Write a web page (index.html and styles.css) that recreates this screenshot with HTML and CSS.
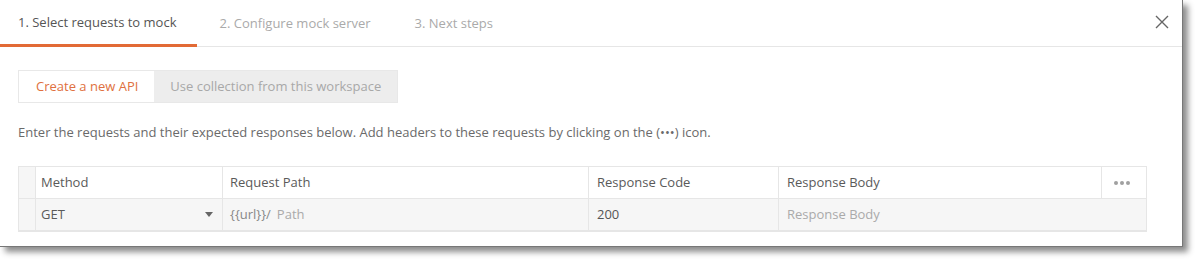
FILE: index.html
```html
<!DOCTYPE html>
<html>
<head>
<meta charset="utf-8">
<link rel="stylesheet" href="styles.css">
</head>
<body>
<div class="dialog">
  <div class="tabs">
    <div class="tab active">1. Select requests to mock</div>
    <div class="tab">2. Configure mock server</div>
    <div class="tab">3. Next steps</div>
    <div class="spacer"></div>
    <div class="close">
      <svg width="14" height="14" viewBox="0 0 14 14"><path d="M1 1L13 13M13 1L1 13" stroke="#666" stroke-width="1.4" fill="none"/></svg>
    </div>
  </div>
  <div class="content">
    <div class="segmented">
      <div class="seg active">Create a new API</div>
      <div class="seg">Use collection from this workspace</div>
    </div>
    <p class="desc">Enter the requests and their expected responses below. Add headers to these requests by clicking on the (•••) icon.</p>
    <div class="table">
      <div class="row head">
        <div class="cell c0"></div>
        <div class="cell c1">Method</div>
        <div class="cell c2">Request Path</div>
        <div class="cell c3">Response Code</div>
        <div class="cell c4">Response Body</div>
        <div class="cell c5"><span class="dots"><i></i><i></i><i></i></span></div>
      </div>
      <div class="row body">
        <div class="cell c0"></div>
        <div class="cell c1 method"><span>GET</span><span class="caret"></span></div>
        <div class="cell c2"><span class="url">{{url}}/</span><span class="ph">Path</span></div>
        <div class="cell c3 val">200</div>
        <div class="cell c45 ph">Response Body</div>
      </div>
    </div>
  </div>
</div>
</body>
</html>
```
FILE: styles.css
```css
html, body {
  margin: 0;
  padding: 0;
  background: #fff;
}
body {
  font-family: "Open Sans", "Liberation Sans", sans-serif;
  font-size: 13px;
  color: #555;
  width: 1200px;
  height: 263px;
  overflow: hidden;
}
.dialog {
  width: 1182px;
  height: 246px;
  background: #fff;
  border-right: 1px solid #777;
  border-bottom: 1px solid #777;
  box-shadow: 5px 5px 6px rgba(0,0,0,0.45);
  box-sizing: content-box;
}
.tabs {
  display: flex;
  align-items: stretch;
  height: 46px;
  border-bottom: 1px solid #e6e6e6;
}
.tab {
  padding: 0 22px;
  line-height: 46px;
  color: #aaa;
  white-space: nowrap;
}
.tab.active {
  padding-left: 18px;
  padding-right: 21px;
  color: #555;
  border-bottom: 3px solid #e26a35;
  margin-bottom: -1px;
  line-height: 44px;
}
.spacer { flex: 1; }
.close {
  width: 40px;
  display: flex;
  align-items: center;
  justify-content: center;
  padding-bottom: 2px;
}
.content {
  padding: 23px 0 0 18px;
}
.segmented {
  display: inline-flex;
  border: 1px solid #e8e8e8;
  height: 31px;
}
.seg {
  line-height: 31px;
  padding: 0 16px 0 16px;
  background: #ededed;
  color: #a8a8a8;
}
.seg.active {
  padding-left: 17px;
  background: #fff;
  color: #e07040;
}
.desc {
  margin: 0;
  padding-top: 20px;
  line-height: 18px;
  color: #6a6a6a;
}
.table {
  margin-top: 25px;
  width: 1127px;
  border: 1px solid #e6e6e6;
  border-bottom-width: 2px;
}
.row {
  display: flex;
  height: 31px;
}
.row.head {
  height: 32px;
  border-bottom: 1px solid #e6e6e6;
  background: #fff;
  box-sizing: border-box;
}
.row.body {
  background: #f6f6f6;
}
.cell {
  line-height: 31px;
  padding-left: 7px;
  border-right: 1px solid #e6e6e6;
  box-sizing: border-box;
  white-space: nowrap;
  color: #5a5a5a;
}
.cell:last-child { border-right: none; }
.c0 { width: 17px; padding: 0; background: #f6f6f6; }
.c1 { width: 187px; padding-left: 5px; }
.c2 { width: 366px; padding-left: 7px; }
.c3 { width: 190px; padding-left: 8px; }
.c4 { width: 323px; padding-left: 8px; }
.c5 {
  flex: 1;
  display: flex;
  align-items: center;
  padding-left: 12px;
}
.dots { display: flex; gap: 2px; }
.dots i {
  display: block;
  width: 4px;
  height: 4px;
  border-radius: 50%;
  background: #a0a0a0;
}
.c45 { flex: 1; padding-left: 8px; }
.method {
  display: flex;
  justify-content: space-between;
  align-items: center;
  padding-right: 9px;
}
.caret {
  width: 0;
  height: 0;
  border-left: 4px solid transparent;
  border-right: 4px solid transparent;
  border-top: 5px solid #666;
}
.url { color: #888; margin-right: 6px; }
.ph { color: #aaa; }
.val { color: #555; }
```
